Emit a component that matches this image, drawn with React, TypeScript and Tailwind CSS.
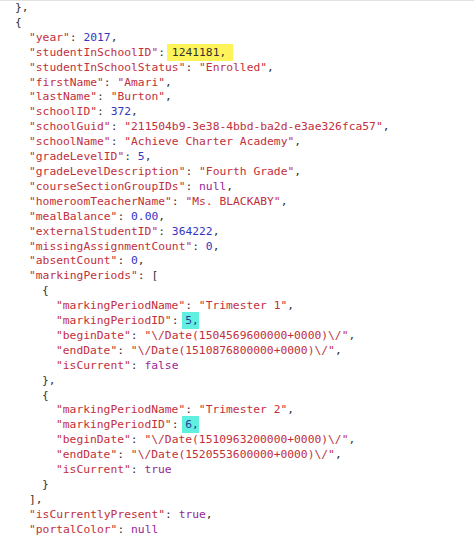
type Tok = { t: 'k' | 's' | 'n' | 'w' | 'p'; v: string; hl?: 'y' | 'c' }
type Line = { i: number; toks: Tok[] }

const k = (v: string): Tok => ({ t: 'k', v: `"${v}"` })
const s = (v: string): Tok => ({ t: 's', v: `"${v}"` })
const n = (v: string, hl?: 'y' | 'c'): Tok => ({ t: 'n', v, hl })
const w = (v: string): Tok => ({ t: 'w', v })
const p = (v: string): Tok => ({ t: 'p', v })

const kv = (i: number, key: string, val: Tok, last = false): Line => ({
    i,
    toks: [k(key), p(': '), val, ...(last ? [] : [p(',')])],
})

const lines: Line[] = [
    { i: 0, toks: [p('},')] },
    { i: 0, toks: [p('{')] },
    kv(1, 'year', n('2017')),
    { i: 1, toks: [k('studentInSchoolID'), p(': '), n('1241181,', 'y')] },
    kv(1, 'studentInSchoolStatus', s('Enrolled')),
    kv(1, 'firstName', s('Amari')),
    kv(1, 'lastName', s('Burton')),
    kv(1, 'schoolID', n('372')),
    kv(1, 'schoolGuid', s('211504b9-3e38-4bbd-ba2d-e3ae326fca57')),
    kv(1, 'schoolName', s('Achieve Charter Academy')),
    kv(1, 'gradeLevelID', n('5')),
    kv(1, 'gradeLevelDescription', s('Fourth Grade')),
    kv(1, 'courseSectionGroupIDs', w('null')),
    kv(1, 'homeroomTeacherName', s('Ms. BLACKABY')),
    kv(1, 'mealBalance', n('0.00')),
    kv(1, 'externalStudentID', n('364222')),
    kv(1, 'missingAssignmentCount', n('0')),
    kv(1, 'absentCount', n('0')),
    { i: 1, toks: [k('markingPeriods'), p(': [')] },
    { i: 2, toks: [p('{')] },
    kv(3, 'markingPeriodName', s('Trimester 1')),
    { i: 3, toks: [k('markingPeriodID'), p(': '), n('5,', 'c')] },
    kv(3, 'beginDate', s('\\/Date(1504569600000+0000)\\/')),
    kv(3, 'endDate', s('\\/Date(1510876800000+0000)\\/')),
    kv(3, 'isCurrent', w('false'), true),
    { i: 2, toks: [p('},')] },
    { i: 2, toks: [p('{')] },
    kv(3, 'markingPeriodName', s('Trimester 2')),
    { i: 3, toks: [k('markingPeriodID'), p(': '), n('6,', 'c')] },
    kv(3, 'beginDate', s('\\/Date(1510963200000+0000)\\/')),
    kv(3, 'endDate', s('\\/Date(1520553600000+0000)\\/')),
    kv(3, 'isCurrent', w('true'), true),
    { i: 2, toks: [p('}')] },
    { i: 1, toks: [p('],')] },
    kv(1, 'isCurrentlyPresent', w('true')),
    kv(1, 'portalColor', w('null'), true),
]

const color = {
    k: 'text-[#c1303c]',
    s: 'text-[#c1303c]',
    n: 'text-[#3535c0]',
    w: 'text-[#9a2596]',
    p: 'text-[#333333]',
}

const Token = ({ tok }: { tok: Tok }) => {
    if (tok.hl === 'y') {
        return (
            <span className="bg-[#fff35a] text-[#333333] py-[2px] pl-[5px] -ml-[5px] pr-[7px] -mr-[7px]">
                {tok.v}
            </span>
        )
    }
    if (tok.hl === 'c') {
        return (
            <span className="bg-[#5ff0df] text-[#2a3a9a] py-[2px] pl-[3px] -ml-[3px]">
                {tok.v}
            </span>
        )
    }
    return <span className={color[tok.t]}>{tok.v}</span>
}

const indents = ['pl-[15px]', 'pl-[29px]', 'pl-[42px]', 'pl-[56px]']

export default function App() {
    return (
        <div className="w-[474px] h-[539px] overflow-hidden bg-white border-t border-[#e2e2e2]">
            <pre className="font-['DejaVu_Sans_Mono',monospace] text-[11.3px] leading-[14.9px] whitespace-pre">
                {lines.map((line, idx) => (
                    <div key={idx} className={indents[line.i]}>
                        {line.toks.map((tok, j) => (
                            <Token key={j} tok={tok} />
                        ))}
                    </div>
                ))}
            </pre>
        </div>
    )
}
